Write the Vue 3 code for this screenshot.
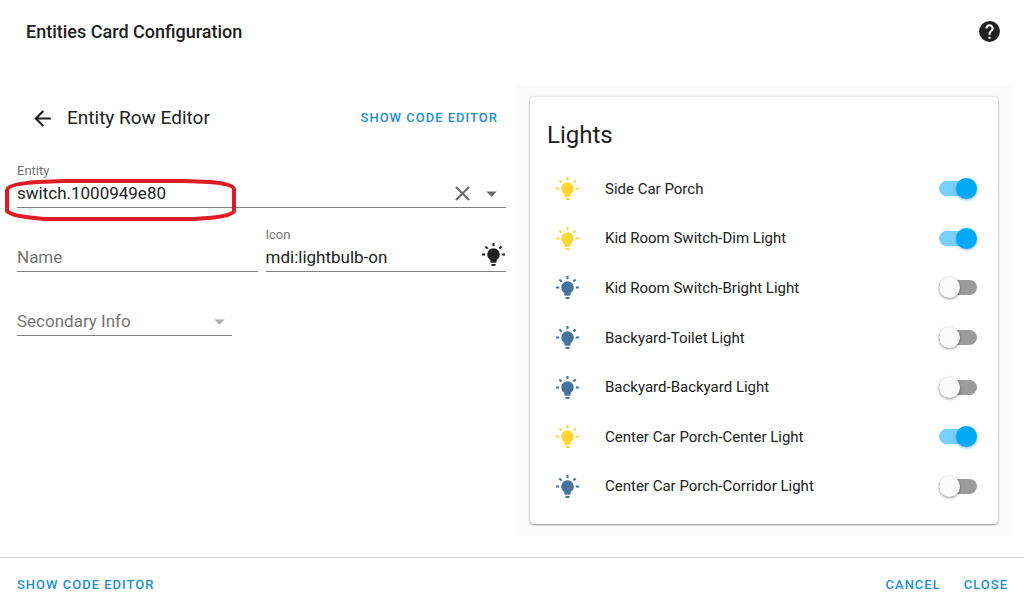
<script setup>
import { ref } from 'vue'

const entity = ref('switch.1000949e80')
const name = ref('')
const icon = ref('mdi:lightbulb-on')
const secondary = ref('')

const lights = ref([
  { id: 'side-porch', label: 'Side Car Porch', on: true },
  { id: 'kid-dim', label: 'Kid Room Switch-Dim Light', on: true },
  { id: 'kid-bright', label: 'Kid Room Switch-Bright Light', on: false },
  { id: 'yard-toilet', label: 'Backyard-Toilet Light', on: false },
  { id: 'yard-back', label: 'Backyard-Backyard Light', on: false },
  { id: 'porch-center', label: 'Center Car Porch-Center Light', on: true },
  { id: 'porch-corridor', label: 'Center Car Porch-Corridor Light', on: false },
])

const bulb =
  'M12,6A6,6 0 0,1 18,12C18,14.22 16.79,16.16 15,17.2V19A1,1 0 0,1 14,20H10A1,1 0 0,1 9,19V17.2C7.21,16.16 6,14.22 6,12A6,6 0 0,1 12,6M14,21V22A1,1 0 0,1 13,23H11A1,1 0 0,1 10,22V21H14M20,11H23V13H20V11M1,11H4V13H1V11M13,1V4H11V1H13M4.92,3.5L7.05,5.64L5.63,7.05L3.5,4.93L4.92,3.5M16.95,5.63L19.07,3.5L20.5,4.93L18.37,7.05L16.95,5.63Z'
</script>

<template>
  <div class="dialog">
    <header class="dialog-header">
      <h1>Entities Card Configuration</h1>
      <button class="icon-button" type="button" aria-label="Help">
        <svg viewBox="0 0 24 24"><path d="M15.07,11.25L14.17,12.17C13.45,12.89 13,13.5 13,15H11V14.5C11,13.39 11.45,12.39 12.17,11.67L13.41,10.41C13.78,10.05 14,9.55 14,9C14,7.89 13.1,7 12,7A2,2 0 0,0 10,9H8A4,4 0 0,1 12,5A4,4 0 0,1 16,9C16,9.88 15.64,10.67 15.07,11.25M13,19H11V17H13M12,2A10,10 0 0,0 2,12A10,10 0 0,0 12,22A10,10 0 0,0 22,12C22,6.47 17.5,2 12,2Z" /></svg>
      </button>
    </header>

    <main class="content">
      <section class="editor">
        <div class="editor-header">
          <button class="icon-button" type="button" aria-label="Back">
            <svg viewBox="0 0 24 24"><path d="M20,11V13H8L13.5,18.5L12.08,19.92L4.16,12L12.08,4.08L13.5,5.5L8,11H20Z" /></svg>
          </button>
          <h2>Entity Row Editor</h2>
          <button class="text-button" type="button">SHOW CODE EDITOR</button>
        </div>

        <div class="field">
          <label for="entity">Entity</label>
          <div class="control">
            <input id="entity" v-model="entity" type="text" />
            <button class="icon-button muted" type="button" aria-label="Clear">
              <svg viewBox="0 0 24 24"><path d="M19,6.41L17.59,5L12,10.59L6.41,5L5,6.41L10.59,12L5,17.59L6.41,19L12,13.41L17.59,19L19,17.59L13.41,12L19,6.41Z" /></svg>
            </button>
            <button class="icon-button muted" type="button" aria-label="Open list">
              <svg viewBox="0 0 24 24"><path d="M7,10L12,15L17,10H7Z" /></svg>
            </button>
          </div>
          <svg class="marker" viewBox="0 0 232 46" aria-hidden="true">
            <path d="M34 5L60 4H180L206 5Q229 7 230 12V34Q228 39 204 41L190 42H40L22 40Q6 38 3 34V13Q4 7 34 5Z" />
          </svg>
        </div>

        <div class="field-row">
          <div class="field">
            <label for="name"></label>
            <div class="control">
              <input id="name" v-model="name" type="text" placeholder="Name" aria-label="Name" />
            </div>
          </div>
          <div class="field">
            <label for="icon">Icon</label>
            <div class="control">
              <input id="icon" v-model="icon" type="text" />
              <svg class="icon-preview" viewBox="0 0 24 24"><path :d="bulb" /></svg>
            </div>
          </div>
        </div>

        <div class="field short">
          <label for="secondary"></label>
          <div class="control">
            <select id="secondary" v-model="secondary" aria-label="Secondary Info">
              <option value="">Secondary Info</option>
            </select>
            <svg class="caret" viewBox="0 0 24 24"><path d="M7,10L12,15L17,10H7Z" /></svg>
          </div>
        </div>
      </section>

      <section class="preview">
        <div class="card">
          <h2>Lights</h2>
          <ul>
            <li v-for="light in lights" :key="light.id">
              <svg class="bulb" :class="{ on: light.on }" viewBox="0 0 24 24"><path :d="bulb" /></svg>
              <label :for="light.id">{{ light.label }}</label>
              <input :id="light.id" v-model="light.on" class="toggle" type="checkbox" role="switch" />
            </li>
          </ul>
        </div>
      </section>
    </main>

    <footer class="dialog-footer">
      <button class="text-button first" type="button">SHOW CODE EDITOR</button>
      <button class="text-button" type="button">CANCEL</button>
      <button class="text-button" type="button">CLOSE</button>
    </footer>
  </div>
</template>

<style>
body {
  margin: 0;
  background: #fff;
}
</style>

<style scoped>
.dialog {
  display: flex;
  flex-direction: column;
  min-height: 100vh;
  box-sizing: border-box;
  color: #212121;
  font-family: Roboto, "Liberation Sans", sans-serif;
  font-size: 17px;
}

button,
input,
select {
  font: inherit;
  color: inherit;
}

h1,
h2,
ul {
  margin: 0;
  padding: 0;
}

svg {
  display: block;
  fill: currentColor;
}

.icon-button {
  display: flex;
  flex: none;
  padding: 0;
  border: 0;
  background: none;
  cursor: pointer;
}

.icon-button svg {
  width: 25px;
  height: 25px;
}

.text-button {
  padding: 8px;
  border: 0;
  background: none;
  color: #2490cb;
  font-size: 13px;
  font-weight: 500;
  line-height: 16px;
  letter-spacing: 1px;
  cursor: pointer;
}

.dialog-header {
  display: flex;
  align-items: center;
  justify-content: space-between;
  height: 62px;
  margin-bottom: 23px;
  padding: 0 22px 0 26px;
}

.dialog-header h1 {
  font-size: 18px;
  font-weight: 500;
}

.content {
  display: grid;
  flex: 1;
  grid-template-columns: minmax(0, 1fr) minmax(0, 1fr);
  gap: 4px;
  padding: 0 11px 21px 17px;
}

.editor {
  display: flex;
  flex-direction: column;
  gap: 19px;
  padding: 13px 7px 0 0;
}

.editor-header {
  display: flex;
  align-items: center;
  height: 40px;
  margin-bottom: 6px;
  padding-left: 13px;
}

.editor-header h2 {
  flex: 1;
  margin-left: 12px;
  font-size: 19px;
  font-weight: 400;
  line-height: 24px;
}

.field {
  position: relative;
}

.field-row {
  display: grid;
  grid-template-columns: minmax(0, 1fr) minmax(0, 1fr);
  gap: 8px;
}

.field label {
  display: block;
  height: 16px;
  color: #737373;
  font-size: 13px;
  line-height: 16px;
}

.control {
  display: flex;
  align-items: center;
  height: 28px;
  border-bottom: 1px solid #808080;
}

.control input,
.control select {
  flex: 1;
  min-width: 0;
  height: 28px;
  padding: 0;
  border: 0;
  outline: 0;
  background: none;
  appearance: none;
}

.control input::placeholder,
.control select {
  color: #757575;
  opacity: 1;
}

.muted {
  margin-right: 2px;
  color: #6b6b6b;
}

.muted + .muted {
  margin-left: 2px;
}

.icon-preview {
  width: 25px;
  height: 25px;
  margin-bottom: 5px;
}

.short {
  width: 44%;
}

.caret {
  width: 25px;
  height: 25px;
  color: #b0b0b0;
  pointer-events: none;
}

.marker {
  position: absolute;
  top: 14px;
  left: -13px;
  width: 232px;
  height: 46px;
  fill: none;
  stroke: #df1b26;
  stroke-width: 4;
  stroke-linejoin: round;
  pointer-events: none;
}

.preview {
  display: flex;
  padding: 12px 15px 12px 13px;
  background: #fafafa;
}

.card {
  display: flex;
  flex: 1;
  flex-direction: column;
  padding: 18px 21px 13px 17px;
  border-radius: 4px;
  background: #fff;
  box-shadow: 0 1px 2px rgba(0, 0, 0, 0.4), 0 0 3px rgba(0, 0, 0, 0.12);
}

.card h2 {
  font-size: 24px;
  font-weight: 400;
  line-height: 40px;
}

.card ul {
  display: flex;
  flex: 1;
  flex-direction: column;
  margin-top: 9px;
  list-style: none;
}

.card li {
  display: flex;
  flex: 1;
  align-items: center;
}

.card li label {
  flex: 1;
  font-size: 15px;
}

.bulb {
  width: 25px;
  height: 25px;
  margin: 0 25px 0 8px;
  color: #44739e;
}

.bulb.on {
  color: #fdd835;
}

.toggle {
  display: flex;
  align-items: center;
  width: 38px;
  height: 15px;
  margin: 0;
  border-radius: 8px;
  background: #9b9b9b;
  appearance: none;
  cursor: pointer;
}

.toggle::before {
  width: 21px;
  height: 21px;
  flex: none;
  border-radius: 50%;
  background: #fafafa;
  box-shadow: 0 1px 3px rgba(0, 0, 0, 0.45);
  content: "";
}

.toggle:checked {
  justify-content: flex-end;
  background: #79cff9;
}

.toggle:checked::before {
  background: #03a9f4;
  box-shadow: 0 1px 3px rgba(3, 120, 200, 0.5);
}

.dialog-footer {
  display: flex;
  align-items: center;
  gap: 7px;
  padding: 11px 8px 3px 9px;
  border-top: 1px solid #dcdcdc;
}

.first {
  margin-right: auto;
}
</style>
